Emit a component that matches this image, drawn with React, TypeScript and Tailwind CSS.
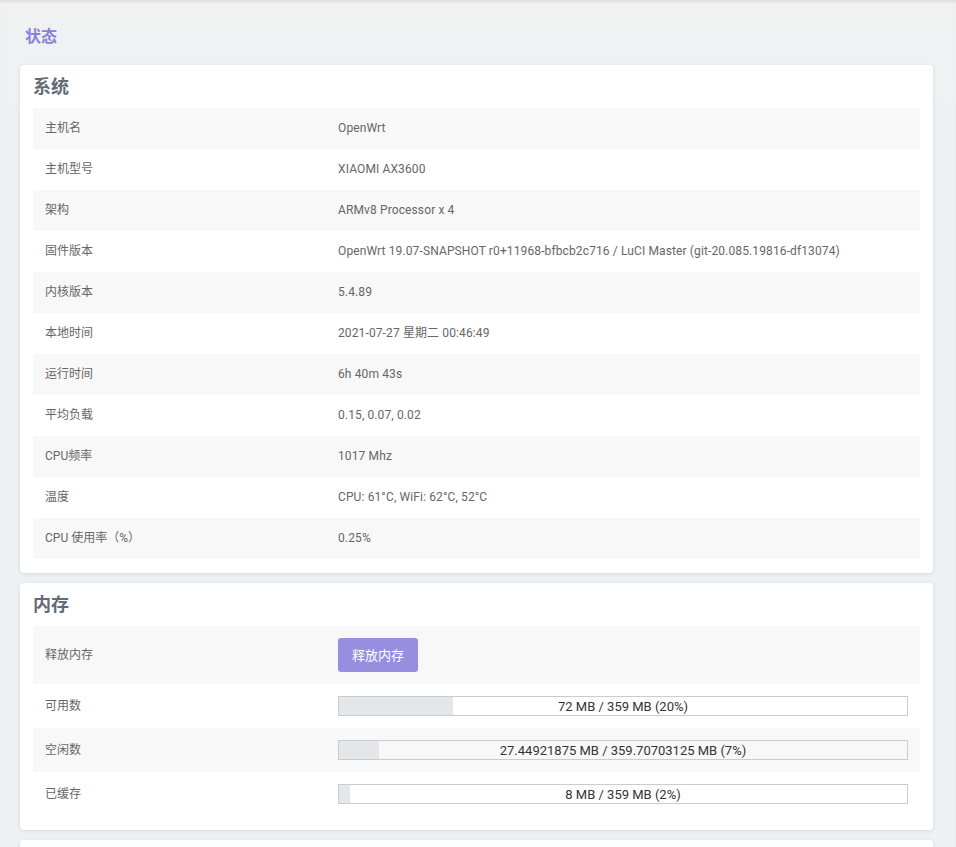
const SYSTEM_ROWS: [string, string][] = [
  ['主机名', 'OpenWrt'],
  ['主机型号', 'XIAOMI AX3600'],
  ['架构', 'ARMv8 Processor x 4'],
  ['固件版本', 'OpenWrt 19.07-SNAPSHOT r0+11968-bfbcb2c716 / LuCI Master (git-20.085.19816-df13074)'],
  ['内核版本', '5.4.89'],
  ['本地时间', '2021-07-27 星期二 00:46:49'],
  ['运行时间', '6h 40m 43s'],
  ['平均负载', '0.15, 0.07, 0.02'],
  ['CPU频率', '1017 Mhz'],
  ['温度', 'CPU: 61°C, WiFi: 62°C, 52°C'],
  ['CPU 使用率（%）', '0.25%'],
];

const MEM_ROWS = [
  { label: '可用数', pct: 20, text: '72 MB / 359 MB (20%)' },
  { label: '空闲数', pct: 7, text: '27.44921875 MB / 359.70703125 MB (7%)' },
  { label: '已缓存', pct: 2, text: '8 MB / 359 MB (2%)' },
];

function Card({ title, children }: { title?: string; children?: React.ReactNode }) {
  return (
    <section className="bg-white rounded-[4px] shadow-[0_1px_4px_rgba(0,0,0,0.1)] px-[13px] pb-[14px] mb-[10px] min-h-[60px]">
      {title && <h3 className="h-[43px] flex items-center text-[18px] font-bold text-[#626b76]">{title}</h3>}
      <div className="flex flex-col">{children}</div>
    </section>
  );
}

function Row({ label, striped, children }: { label: string; striped: boolean; children: React.ReactNode }) {
  return (
    <div className={`flex items-center py-3 ${striped ? 'bg-[#f8f8f8]' : 'bg-white'}`}>
      <div className="w-[293px] shrink-0 px-3 leading-[17px]">{label}</div>
      <div className="flex-1 min-w-0 px-3 leading-[17px] tracking-[0.12px]">{children}</div>
    </div>
  );
}

export default function App() {
  return (
    <div
      className="min-h-screen bg-[linear-gradient(#f1f1f1,#eef1f3_110px)] shadow-[inset_0_3px_3px_-1px_rgba(0,0,0,0.08)] pl-5 pr-[23px] text-[12px] text-[#666]"
      style={{ fontFamily: 'Roboto, "Noto Sans CJK SC", sans-serif' }}
    >
      <h2 className="pt-[25px] pb-[16px] pl-[5px] text-[16px] leading-[24px] font-bold text-[#8a80dc]">状态</h2>

      <Card title="系统">
        {SYSTEM_ROWS.map(([k, v], i) => (
          <Row key={k} label={k} striped={i % 2 === 0}>
            {v}
          </Row>
        ))}
      </Card>

      <Card title="内存">
        <Row label="释放内存" striped>
          <button className="h-[34px] px-[14px] rounded-[3px] bg-[#978ee0] text-white text-[13px] tracking-normal">释放内存</button>
        </Row>
        {MEM_ROWS.map((m, i) => (
          <Row key={m.label} label={m.label} striped={i % 2 === 1}>
            <div className="relative h-5 border border-[#cccccc] text-[#333] text-[13px] tracking-normal">
              <div className="h-full bg-[#e3e7ea]" style={{ width: `${m.pct}%` }} />
              <div className="absolute inset-0 flex items-center justify-center leading-none">{m.text}</div>
            </div>
          </Row>
        ))}
      </Card>

      <Card />
    </div>
  );
}
